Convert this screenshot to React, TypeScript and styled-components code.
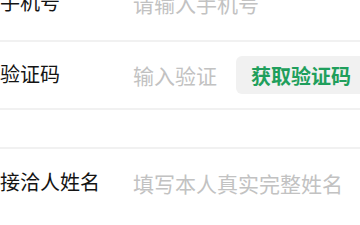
import React from 'react';
import styled, { createGlobalStyle } from 'styled-components';

const GlobalStyle = createGlobalStyle`
  html, body {
    margin: 0;
    padding: 0;
    background: #ffffff;
    overflow: hidden;
  }
  body {
    font-family: "Noto Sans CJK SC", "Noto Sans", sans-serif;
  }
`;

const Form = styled.div`
  width: 366px;
  margin-top: -34px;
  display: flex;
  flex-direction: column;
`;

const Row = styled.div<{ $height?: number }>`
  display: flex;
  align-items: center;
  height: ${(p) => p.$height || 68}px;
  border-bottom: 2px solid #f1f1f1;
  box-sizing: border-box;
`;

const LastRow = styled(Row)`
  border-bottom: none;
`;

const Label = styled.div`
  width: 133px;
  flex-shrink: 0;
  font-size: 20px;
  color: #141414;
  margin-top: -4px;
`;

const Input = styled.input`
  flex: 1;
  min-width: 0;
  border: none;
  outline: none;
  background: transparent;
  padding: 0;
  font-family: inherit;
  font-size: 21px;
  color: #141414;

  &::placeholder {
    color: #c2c2c2;
  }
`;

const CodeButton = styled.button`
  flex-shrink: 0;
  height: 38px;
  padding: 0 15px;
  border: none;
  border-radius: 6px;
  background: #f1f1f1;
  color: #1f9f5c;
  font-family: inherit;
  font-size: 20px;
  font-weight: 700;
`;

const App = () => {
  return (
    <>
      <GlobalStyle />
      <Form>
        <Row $height={76}>
          <Label>手机号</Label>
          <Input placeholder='请输入手机号' />
        </Row>
        <Row>
          <Label>验证码</Label>
          <Input placeholder='输入验证' />
          <CodeButton>获取验证码</CodeButton>
        </Row>
        <Row $height={39} />
        <LastRow>
          <Label>接洽人姓名</Label>
          <Input placeholder='填写本人真实完整姓名' />
        </LastRow>
      </Form>
    </>
  );
};

export default App;
